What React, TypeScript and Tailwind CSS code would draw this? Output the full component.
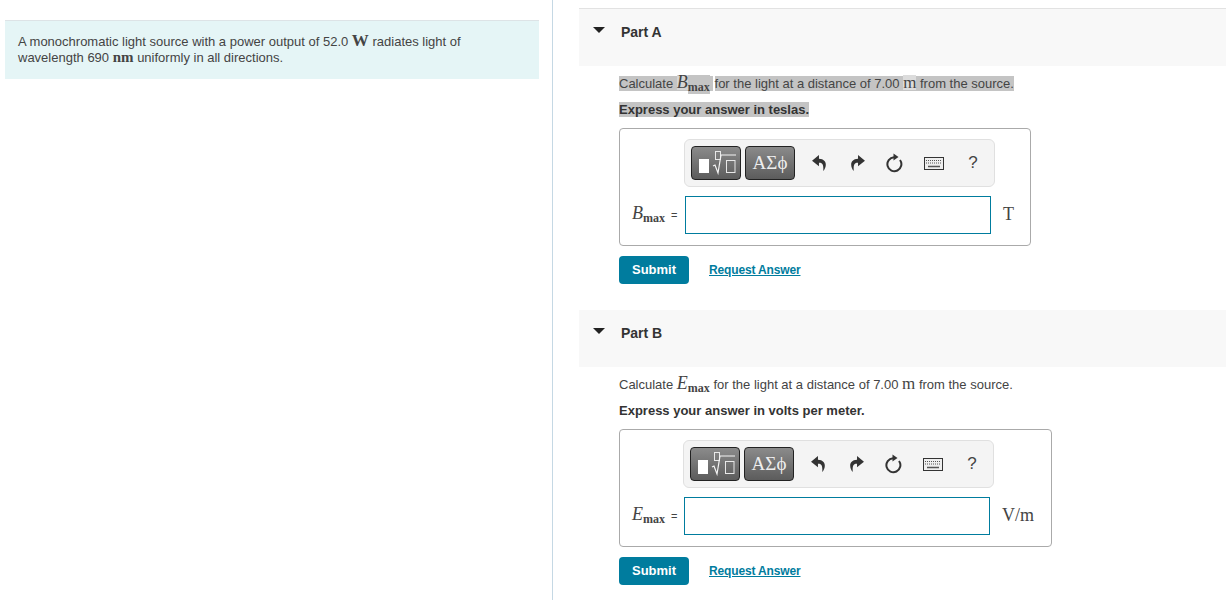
import React from "react";

const serif = "font-['Liberation_Serif',serif]";

const Sym = ({ v, sub, marked }: { v: string; sub: string; marked?: boolean }) => (
  <span className={`${serif} text-[#444] whitespace-nowrap`}>
    <i className={`text-[18px] ${marked ? "inline-block h-[15px] leading-[15px] bg-[#d6d6d6]" : "leading-none"}`}>{v}</i>
    <span className={`text-[12px] font-bold relative top-[3px] ${marked ? "bg-[#c4c4c4] pt-[5px]" : ""}`}>{sub}</span>
  </span>
);

const Unit = ({ children, marked }: { children: React.ReactNode; marked?: boolean }) => (
  <span className={`${serif} text-[17px] text-[#444] ${marked ? "inline-block h-[15px] leading-[15px] bg-[#dcdcdc]" : "leading-none"}`}>{children}</span>
);

const Toolbar = ({ className }: { className: string }) => (
  <div className={`h-[48px] w-[311px] flex items-center pl-[6px] bg-[#f4f4f4] border border-[#e0e0e0] rounded-md ${className}`}>
    <div className="w-[50px] h-[34px] rounded border border-[#222] bg-gradient-to-b from-[#8b8b8b] to-[#5c5c5c] flex items-center justify-center">
      <svg width="42" height="30" viewBox="0 0 42 30">
        <rect x="4" y="11" width="10" height="14" fill="#fff" />
        <rect x="20.500" y="3.500" width="5" height="8" fill="none" stroke="#e8e8e8" />
        <path d="M18 18l2-1 3 8 3-18h15" fill="none" stroke="#f4f4f4" strokeWidth="1.200" />
        <rect x="31.500" y="12.500" width="8.500" height="12" fill="none" stroke="#e8e8e8" />
      </svg>
    </div>
    <div className={`ml-[4px] w-[50px] h-[34px] rounded border border-[#222] bg-gradient-to-b from-[#8b8b8b] to-[#5c5c5c] flex items-center justify-center text-[19px] text-[#eee] ${serif}`}>
      ΑΣϕ
    </div>
    <div className="ml-[5px] flex items-center">
      <div className="w-[38px] flex justify-center">
        <svg width="15" height="16" viewBox="0 0 14 15">
          <path d="M6.500 0L0 5.500l6.500 5V7.200c3 -.2 4.500 1.300 4 7.800 3.500-4 4-11-4-11.400z" fill="#333" />
        </svg>
      </div>
      <div className="w-[38px] flex justify-center">
        <svg width="15" height="16" viewBox="0 0 14 15">
          <path transform="matrix(-1 0 0 1 14 0)" d="M6.500 0L0 5.500l6.500 5V7.200c3 -.2 4.500 1.300 4 7.800 3.500-4 4-11-4-11.400z" fill="#333" />
        </svg>
      </div>
      <div className="w-[38px] flex justify-center">
        <svg width="20" height="20" viewBox="0 0 20 20">
          <path d="M15 7A7 7 0 1 1 9 4.200" fill="none" stroke="#333" strokeWidth="2" />
          <path d="M8.500 0.500v7l5-3.500z" fill="#333" />
        </svg>
      </div>
      <div className="w-[40px] flex justify-center">
        <svg width="20" height="13" viewBox="0 0 20 13">
          <rect x="0.500" y="0.500" width="19" height="12" fill="#eee" stroke="#333" />
          <path d="M2 3.500h16M2 6h16" stroke="#555" strokeWidth="1.200" strokeDasharray="1 1" />
          <path d="M4 9.500h12" stroke="#555" strokeWidth="1.500" />
        </svg>
      </div>
      <div className="w-[38px] text-center text-[17px] text-[#444]">?</div>
    </div>
  </div>
);

const Part = ({
  name,
  headerClass,
  question,
  questionClass,
  expressClass,
  selected,
  express,
  boxClass,
  toolbarClass,
  inputClass,
  label,
  unit,
}: {
  name: string;
  headerClass: string;
  question: React.ReactNode;
  questionClass: string;
  expressClass: string;
  selected?: boolean;
  express: string;
  boxClass: string;
  toolbarClass: string;
  inputClass: string;
  label: React.ReactNode;
  unit: string;
}) => (
  <section>
    <div className={`bg-[#f8f8f8] flex items-start ${headerClass}`}>
      <span className="ml-[14px] mt-[5px] w-0 h-0 border-x-[6px] border-x-transparent border-t-[6px] border-t-[#222]" />
      <span className="ml-[16px] text-[14px] font-bold text-[#333]">{name}</span>
    </div>
    <div className="pl-[40px]">
      <p className={`h-[18px] leading-[18px] text-[13px] text-[#444] whitespace-nowrap ${questionClass}`}>{question}</p>
      <p className={`h-[18px] leading-[18px] text-[13px] font-bold text-[#333] ${expressClass}`}>
        <span className={selected ? "bg-[#c4c4c4]" : ""}>{express}</span>
      </p>
      <div className={`mt-[9px] h-[118px] border border-[#aaa] rounded pt-[10px] ${boxClass}`}>
        <Toolbar className={toolbarClass} />
        <div className="mt-[9px] flex items-center">
          <div className="w-[65px] pl-[12px] pb-[2px] whitespace-nowrap text-[11px] text-[#444]">{label}</div>
          <div className={`w-[306px] h-[38px] bg-white border border-[#007c9e] ${inputClass}`} />
          <div className={`ml-[12px] pb-[2px] text-[18px] text-[#444] ${serif}`}>{unit}</div>
        </div>
      </div>
      <div className="mt-[10px] flex items-center">
        <button className="w-[70px] h-[28px] rounded-sm bg-[#007c9e] text-white text-[13px] font-bold">Submit</button>
        <a className="ml-[20px] text-[12px] tracking-[-0.15px] font-bold text-[#007c9e] underline">Request Answer</a>
      </div>
    </div>
  </section>
);

export default function App() {
  return (
    <div className="h-[600px] overflow-hidden bg-white flex font-['Liberation_Sans',Arial,sans-serif]">
      <aside className="w-[553px] shrink-0 border-r border-[#c5d8e4] pl-[5px] pr-[13px] pt-[20px]">
        <div className="h-[59px] bg-[#e5f5f6] border-t border-[#dde3e6] pl-[13px] pt-[11px] text-[13px] leading-[16px] text-[#444]">
          <p>
            A monochromatic light source with a power output of 52.0 <span className={`${serif} font-bold text-[17px] leading-none`}>W</span> radiates light of
            <br />
            wavelength 690 <span className={`${serif} font-bold text-[15px] leading-none`}>nm</span> uniformly in all directions.
          </p>
        </div>
      </aside>
      <main className="flex-1 pl-[26px] pt-[8px]">
        <Part
          name="Part A"
          headerClass="h-[58px] border-t border-[#e2e2e2] pt-[13px]"
          selected
          questionClass="mt-[9px]"
          expressClass="mt-[8px]"
          question={
            <span className="bg-[#c4c4c4]">
              Calculate <Sym v="B" sub="max" marked /> <span className="bg-white">&#8202;</span>for the light at a distance of 7.00 <Unit marked>m</Unit> from the source.
            </span>
          }
          express="Express your answer in teslas."
          boxClass="w-[412px]"
          toolbarClass="ml-[64px]"
          inputClass=""
          label={<><Sym v="B" sub="max" /> &nbsp;=</>}
          unit="T"
        />
        <div className="h-[26px]" />
        <Part
          name="Part B"
          headerClass="h-[57px] pt-[13px]"
          questionClass="mt-[7px]"
          expressClass="mt-[10px]"
          question={
            <>
              Calculate <Sym v="E" sub="max" /> for the light at a distance of 7.00 <Unit>m</Unit> from the source.
            </>
          }
          express="Express your answer in volts per meter."
          boxClass="w-[433px]"
          toolbarClass="ml-[63px]"
          inputClass="-ml-px"
          label={<><Sym v="E" sub="max" /> &nbsp;=</>}
          unit="V/m"
        />
      </main>
    </div>
  );
}
